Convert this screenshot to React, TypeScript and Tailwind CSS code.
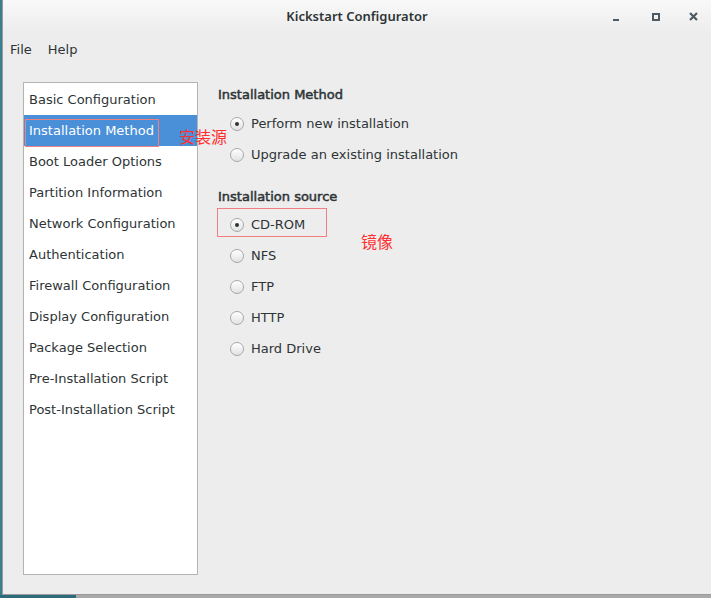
import React from "react";

const SECTIONS = [
  "Basic Configuration",
  "Installation Method",
  "Boot Loader Options",
  "Partition Information",
  "Network Configuration",
  "Authentication",
  "Firewall Configuration",
  "Display Configuration",
  "Package Selection",
  "Pre-Installation Script",
  "Post-Installation Script",
];

const SOURCES = ["CD-ROM", "NFS", "FTP", "HTTP", "Hard Drive"];

function Radio({ checked, label }: { checked?: boolean; label: string }) {
  return (
    <div className="flex items-center h-[31px]">
      <span className="w-[14px] h-[14px] rounded-full border border-[#a4a8a8] bg-gradient-to-b from-[#ffffff] to-[#e2e2e2] flex items-center justify-center shadow-[inset_0_1px_0_#fff]">
        {checked && <span className="w-[4px] h-[4px] rounded-full bg-[#2e3436]" />}
      </span>
      <span className="ml-[7px] text-[13px] text-[#2e3436]">{label}</span>
    </div>
  );
}

export default function App() {
  return (
    <div
      className="relative w-[711px] h-[598px] flex flex-col overflow-hidden bg-[#2d6a7a]"
      style={{ fontFamily: '"DejaVu Sans", "Noto Sans CJK SC", sans-serif' }}
    >
      <div className="flex flex-1 min-h-0">
        {/* desktop edge */}
        <div className="w-[2px] bg-[#3a7e90]" />
        {/* window */}
        <div className="flex-1 flex flex-col bg-[#ededed] border-l border-b border-[#9a9a9a]">
          {/* title bar */}
          <div className="h-[33px] bg-gradient-to-b from-[#f8f8f8] to-[#ededed] flex items-center relative">
            <div
              className="flex-1 text-center text-[13px] font-semibold text-[#2e3436]"
              style={{ fontFamily: '"Noto Sans", sans-serif' }}
            >
              Kickstart Configurator
            </div>
            <div className="absolute right-0 top-0 h-full flex items-center">
              <div className="w-[42px] flex justify-center items-center h-full">
                <span className="w-[6px] h-[2px] bg-[#4c5a63] mt-[6px]" />
              </div>
              <div className="w-[38px] flex justify-center items-center h-full">
                <span className="w-[8px] h-[8px] border-2 border-[#4c5a63]" />
              </div>
              <div className="w-[36px] flex justify-center items-center h-full">
                <svg width="9" height="9" viewBox="0 0 9 9">
                  <path d="M1 1 L8 8 M8 1 L1 8" stroke="#4c5a63" strokeWidth="2.2" />
                </svg>
              </div>
            </div>
          </div>
          {/* menu bar */}
          <div className="h-[30px] flex items-center text-[13px] text-[#2e3436] pl-[7px] pt-[3px] gap-[16px]">
            <span>File</span>
            <span>Help</span>
          </div>
          {/* body */}
          <div className="flex flex-1 min-h-0 pt-[19px] pb-[19px] pl-[20px]">
            <div className="w-[175px] bg-white border border-[#b4b4b4] pt-[1px]">
              {SECTIONS.map((s) => (
                <div
                  key={s}
                  className={`h-[31px] flex items-center pl-[5px] text-[13px] ${
                    s === "Installation Method" ? "bg-[#4a90d9] text-white" : "text-[#2e3436]"
                  }`}
                >
                  {s}
                </div>
              ))}
            </div>
            <div className="flex-1 pl-[20px] pt-[3px]">
              <div className="text-[13px] text-[#2e3436] h-[20px] flex items-center [-webkit-text-stroke:0.5px]">
                Installation Method
              </div>
              <div className="pl-[12px] pt-[3px]">
                <Radio checked label="Perform new installation" />
                <Radio label="Upgrade an existing installation" />
              </div>
              <div className="text-[13px] text-[#2e3436] h-[20px] flex items-center mt-[17px] [-webkit-text-stroke:0.5px]">
                Installation source
              </div>
              <div className="pl-[12px] pt-[2px]">
                {SOURCES.map((s, i) => (
                  <Radio key={s} checked={i === 0} label={s} />
                ))}
              </div>
            </div>
          </div>
        </div>
      </div>
      {/* desktop below */}
      <div className="h-[3px] flex">
        <div className="w-[76px] bg-[#2d6a7a]" />
        <div className="flex-1 bg-[#a9a9a9]" />
      </div>

      {/* red annotations drawn over the screenshot */}
      <div className="absolute left-[25px] top-[119px] w-[134px] h-[28px] border border-[#f08080]" />
      <div className="absolute left-[179px] top-[128px] text-[16px] leading-[20px] text-[#ff3030]">安装源</div>
      <div className="absolute left-[217px] top-[208px] w-[110px] h-[29px] border border-[#f08080]" />
      <div className="absolute left-[361px] top-[233px] text-[16px] leading-[20px] text-[#ff3030]">镜像</div>
    </div>
  );
}
